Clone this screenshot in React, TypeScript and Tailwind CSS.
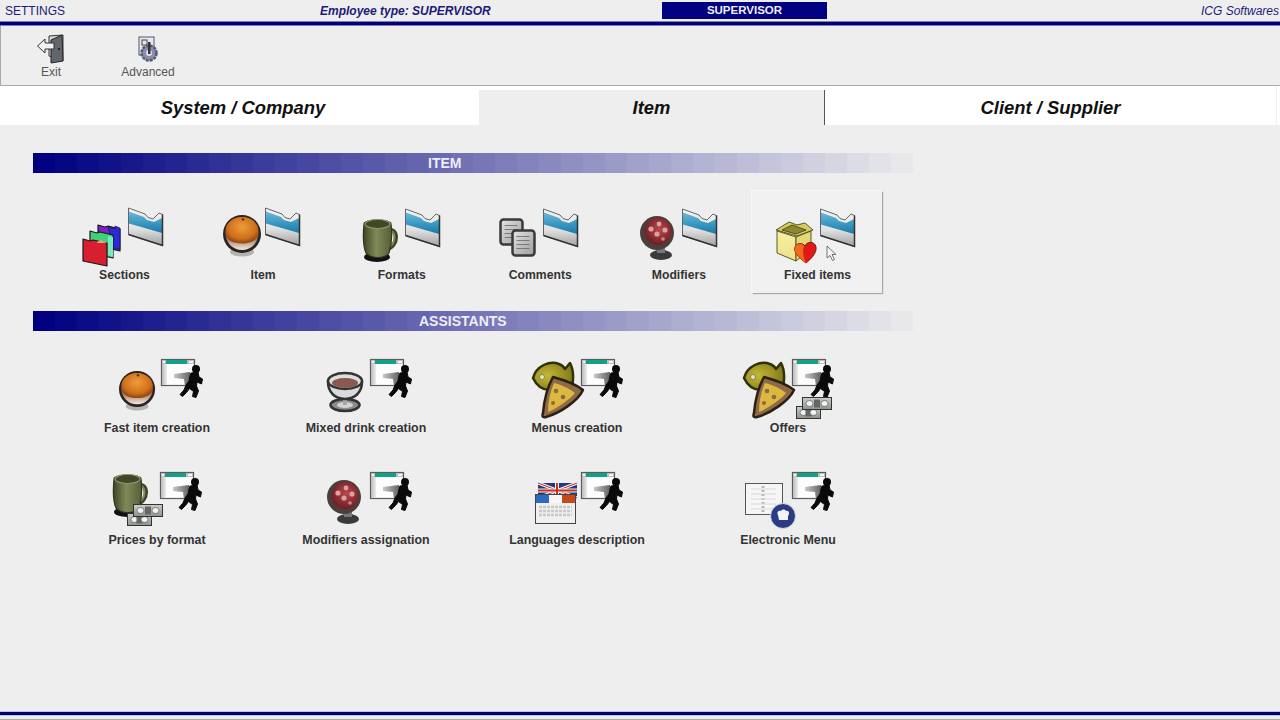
import type { ReactNode } from 'react';

const font = { fontFamily: '"Liberation Sans", Arial, sans-serif' };

function Defs() {
  return (
    <svg width="0" height="0" className="absolute">
      <defs>
        <linearGradient id="folderBlue" x1="0" y1="0" x2="0" y2="1">
          <stop offset="0" stopColor="#6cb8d8" />
          <stop offset="0.6" stopColor="#3494be" />
          <stop offset="1" stopColor="#1c7aa6" />
        </linearGradient>
        <linearGradient id="folderGray" x1="0" y1="0" x2="0" y2="1">
          <stop offset="0" stopColor="#f4f4f4" />
          <stop offset="0.55" stopColor="#e2e2e2" />
          <stop offset="1" stopColor="#a0a0a0" />
        </linearGradient>
        <radialGradient id="orange" cx="0.5" cy="0.38" r="0.62">
          <stop offset="0" stopColor="#ee9c3c" />
          <stop offset="0.7" stopColor="#cf6f1a" />
          <stop offset="1" stopColor="#8a4510" />
        </radialGradient>
        <linearGradient id="orangeBase" x1="0" y1="0" x2="0" y2="1">
          <stop offset="0.6" stopColor="#8a5a3a" />
          <stop offset="0.8" stopColor="#c8a898" />
          <stop offset="1" stopColor="#f0e8e4" />
        </linearGradient>
        <linearGradient id="mug" x1="0" y1="0" x2="1" y2="0">
          <stop offset="0" stopColor="#3f4628" />
          <stop offset="0.45" stopColor="#7f8a58" />
          <stop offset="1" stopColor="#565f38" />
        </linearGradient>
        <radialGradient id="ball" cx="0.55" cy="0.42" r="0.62">
          <stop offset="0" stopColor="#b8484e" />
          <stop offset="1" stopColor="#6a1c20" />
        </radialGradient>
        <radialGradient id="fish" cx="0.35" cy="0.45" r="0.7">
          <stop offset="0" stopColor="#c4b838" />
          <stop offset="1" stopColor="#7c7414" />
        </radialGradient>
        <linearGradient id="money" x1="0" y1="0" x2="0" y2="1">
          <stop offset="0" stopColor="#c8cec8" />
          <stop offset="1" stopColor="#8d948e" />
        </linearGradient>
        <linearGradient id="doc" x1="0" y1="0" x2="1" y2="1">
          <stop offset="0" stopColor="#e4e4e4" />
          <stop offset="1" stopColor="#9c9c9c" />
        </linearGradient>
        <linearGradient id="box" x1="0" y1="0" x2="0" y2="1">
          <stop offset="0" stopColor="#f6f0a4" />
          <stop offset="1" stopColor="#ece284" />
        </linearGradient>
        <linearGradient id="arm" x1="0" y1="0" x2="1" y2="0">
          <stop offset="0" stopColor="#c8c8c8" />
          <stop offset="1" stopColor="#555" />
        </linearGradient>
        <linearGradient id="strip" x1="0" y1="0" x2="1" y2="0">
          <stop offset="0" stopColor="#bcbcbc" />
          <stop offset="1" stopColor="#ececec" />
        </linearGradient>
      </defs>
    </svg>
  );
}

function Folder({ x, y }: { x: number; y: number }) {
  return (
    <g transform={`translate(${x} ${y})`}>
      <path
        d="M0.500 1 L17 7 L20 10.500 L25 12 L31 6 L34.500 7.500 L34.500 38.500 L0.500 27.500 Z"
        fill="url(#folderGray)"
        stroke="#555"
        strokeWidth="0.900"
        strokeLinejoin="round"
      />
      <path d="M1 4.500 L16 10 L19 13 L26 15 L34 11 L34 26 L1 16.500 Z" fill="url(#folderBlue)" />
      <path d="M34.500 7.500 L34.500 38.500 L0.500 27.500" fill="none" stroke="#333" strokeWidth="1.500" />
    </g>
  );
}

function Orange({ x, y, s = 1 }: { x: number; y: number; s?: number }) {
  return (
    <g transform={`translate(${x} ${y}) scale(${s})`}>
      <ellipse cx="19" cy="37" rx="12" ry="4.500" fill="#777" opacity="0.5" />
      <circle cx="19" cy="19" r="19" fill="#2c2420" />
      <circle cx="19" cy="18.500" r="16.500" fill="url(#orangeBase)" />
      <path d="M2.500 16 A16.500 14 0 0 1 35.500 16 C35.500 25 28 28.500 19 28.500 C10 28.500 2.500 25 2.500 16 Z" fill="url(#orange)" />
      <circle cx="20" cy="4.500" r="1.300" fill="#5a3410" />
    </g>
  );
}

function Mug({ x, y }: { x: number; y: number }) {
  return (
    <g transform={`translate(${x} ${y})`}>
      <ellipse cx="14" cy="39" rx="13" ry="5" fill="#111" />
      <path d="M24 12 C36 9 36 28 24 31" fill="none" stroke="#3c4226" strokeWidth="4" />
      <path d="M24 12 C34 10 34 28 24 30" fill="none" stroke="#7f8a58" strokeWidth="2" />
      <path d="M1 6 C0 16 0 28 3 35 C8 41 22 41 26 35 C29 26 29 14 28 6 C28 1 1 1 1 6 Z" fill="url(#mug)" stroke="#30341e" strokeWidth="1.200" />
      <ellipse cx="14.500" cy="6" rx="12.500" ry="4.500" fill="#3f4826" stroke="#8d9668" strokeWidth="1.200" />
    </g>
  );
}

function Sections({ x, y }: { x: number; y: number }) {
  const sheet = (dx: number, dy: number, color: string, w: number, h: number) => (
    <path
      d={`M${dx} ${dy} L${dx + 7} ${dy + 2} L${dx + 10} ${dy + 1} L${dx + w} ${dy + 4} L${dx + w} ${dy + h} L${dx} ${dy + h - 5} Z`}
      fill={color}
      stroke="#1a1a1a"
      strokeWidth="1.200"
      strokeLinejoin="round"
    />
  );
  return (
    <g transform={`translate(${x} ${y})`}>
      {sheet(16, 1, '#7a22c8', 22, 26)}
      <path d="M26 3 L33 5 L33 2 L38 4 L38 25 L32 25 Z" fill="#2a2ad8" stroke="#111" strokeWidth="0.600" />
      {sheet(8, 7, '#3fd07a', 23, 27)}
      <path d="M26 12 L31 13 L31 33 L26 31 Z" fill="#7ce8c0" />
      {sheet(1, 15, '#d81f30', 24, 27)}
      <path d="M15 18 L19 16 L25 19 L15 19 Z" fill="#e8a080" />
    </g>
  );
}

function Comments({ x, y }: { x: number; y: number }) {
  const doc = (dx: number, dy: number, w: number, h: number) => (
    <g>
      <rect x={dx} y={dy} width={w} height={h} rx="3" fill="url(#doc)" stroke="#3a3a3a" strokeWidth="2.500" />
      {[6, 10, 14, 18].map((l) => (
        <line key={l} x1={dx + 4} x2={dx + w - 5} y1={dy + l} y2={dy + l} stroke="#666" strokeWidth="0.800" />
      ))}
    </g>
  );
  return (
    <g transform={`translate(${x} ${y})`}>
      {doc(1.500, 1.500, 22, 25)}
      {doc(13.500, 12.500, 22, 25)}
    </g>
  );
}

function Ball({ x, y }: { x: number; y: number }) {
  return (
    <g transform={`translate(${x} ${y})`}>
      <ellipse cx="21" cy="39" rx="11" ry="5" fill="#3a3a3a" />
      <rect x="17" y="28" width="8" height="9" fill="#777" />
      <ellipse cx="17" cy="17" rx="17" ry="17" fill="#4a3f3c" />
      <ellipse cx="18" cy="15.500" rx="13.500" ry="13.500" fill="url(#ball)" />
      <circle cx="11" cy="13" r="2.600" fill="#dca0a0" />
      <circle cx="19" cy="8" r="2.400" fill="#dca0a0" />
      <circle cx="25" cy="14" r="2.600" fill="#dca0a0" />
      <circle cx="17" cy="18" r="2.600" fill="#dca0a0" />
      <circle cx="23" cy="23" r="1.800" fill="#cc8888" />
    </g>
  );
}

function GiftBox({ x, y }: { x: number; y: number }) {
  return (
    <g transform={`translate(${x} ${y})`} stroke="#4a4a20" strokeWidth="0.900" strokeLinejoin="round">
      <path d="M1 9 L14 1 L22 4 L30 2 L38 9 L22 15 Z" fill="#d4cc60" />
      <path d="M7 9 L17 4 L31 9 L21 13 Z" fill="#8e8a2c" />
      <path d="M2 10 L21 16 L21 40 L2 32 Z" fill="url(#box)" />
      <path d="M21 16 L36 10 L36 28 L21 40 Z" fill="#e2d874" />
      <path d="M31 42 C24 37 18 31 20 26 C22 21 28 22 30 25 C32 20 40 20 41 26 C42 32 36 38 31 42 Z" fill="#e01818" stroke="#7a1010" />
      <path d="M31 42 C24 37 18 31 20 26 C22 22 27 22 29 25 C27 31 29 37 31 42 Z" fill="#ee6a1c" stroke="none" />
    </g>
  );
}

function Cursor({ x, y }: { x: number; y: number }) {
  return (
    <path
      transform={`translate(${x} ${y})`}
      d="M0 0 L0 12 L3 9.500 L5.500 14.500 L7.500 13.500 L5 8.500 L9 8.500 Z"
      fill="#f4f4f4"
      stroke="#555"
      strokeWidth="0.800"
    />
  );
}

function RunnerWindow({ x, y }: { x: number; y: number }) {
  return (
    <g transform={`translate(${x} ${y})`}>
      <rect x="0.500" y="0.500" width="33" height="26" fill="#fdfdfd" stroke="#5c5c5c" strokeWidth="1.200" />
      <rect x="1" y="5" width="5" height="21" fill="url(#strip)" />
      <rect x="1" y="1" width="32" height="4" fill="#bdbdbd" />
      <rect x="5" y="1" width="21" height="4" fill="#12a088" />
      <rect x="2" y="2" width="2" height="2" fill="#f4f4f4" />
      <rect x="28" y="2" width="4" height="2" fill="#f4f4f4" />
      <path d="M13 15 L29 13 L31 20 L30 28 L24 28 L23 20 L13 19 Z" fill="url(#arm)" />
      <circle cx="35" cy="10" r="4" fill="#0a0a0a" />
      <path
        d="M30 14 L37 13 L38 18 L41.500 20 L40.500 25 L36 23 L35.500 27 L37.500 32 L35 38.500 L31.500 37.500 L32.500 32.500 L28.500 29.500 L25.500 33.500 L21.500 37.500 L19 35.500 L23 31 L25 26 L28 22 L29 17 Z"
        fill="#0a0a0a"
        stroke="#0a0a0a"
        strokeWidth="1"
        strokeLinejoin="round"
      />
    </g>
  );
}

function Glass({ x, y }: { x: number; y: number }) {
  return (
    <g transform={`translate(${x} ${y})`}>
      <ellipse cx="18" cy="33" rx="14.500" ry="6" fill="#8c8c8c" stroke="#333" strokeWidth="2.500" />
      <ellipse cx="18" cy="33" rx="8" ry="3" fill="#d4d4d4" />
      <rect x="16" y="24" width="4" height="9" fill="#a8a8a8" />
      <path d="M1 10 C1 20 8 27 18 27 C28 27 35 20 35 10 Z" fill="#d8dcdc" stroke="#333" strokeWidth="2.500" />
      <ellipse cx="18" cy="9" rx="17" ry="8" fill="#dedede" stroke="#333" strokeWidth="2.500" />
      <ellipse cx="18" cy="11" rx="13" ry="5" fill="#8a5a50" />
    </g>
  );
}

function FishPizza({ x, y }: { x: number; y: number }) {
  return (
    <g transform={`translate(${x} ${y})`}>
      <path
        d="M1 18 C4 6 18 0 27 4 C30 5 32 7 33 9 L38 3 C42 10 42 22 39 31 L32 24 C26 31 9 35 1 18 Z"
        fill="url(#fish)"
        stroke="#30300c"
        strokeWidth="2.500"
        strokeLinejoin="round"
      />
      <circle cx="10" cy="17" r="2.500" fill="#e8e4b0" stroke="#555" strokeWidth="0.600" />
      <path
        d="M21 17 C32 20 45 25 51 30 C46 41 28 53 14 57 C10 58 10 56 11 53 C12 41 15 28 21 17 Z"
        fill="#8e6a48"
        stroke="#2a2014"
        strokeWidth="2.500"
        strokeLinejoin="round"
      />
      <path d="M22 23 C30 25 38 29 43 33 C38 39 26 48 16 52 C16 42 18 32 22 23 Z" fill="#dcb840" />
      <circle cx="24" cy="31" r="2.300" fill="#8a6a40" />
      <circle cx="31" cy="37" r="2.300" fill="#8a6a40" />
      <circle cx="21" cy="43" r="2" fill="#8a6a40" />
    </g>
  );
}

function Money({ x, y }: { x: number; y: number }) {
  const bill = (dx: number, dy: number, w: number) => (
    <g>
      <rect x={dx} y={dy} width={w} height="12" fill="url(#money)" stroke="#333" strokeWidth="1" />
      <ellipse cx={dx + 7} cy={dy + 6} rx="3.500" ry="3" fill="#f2f2f2" stroke="#444" strokeWidth="0.600" />
      <rect x={dx + w / 2 - 3} y={dy + 2} width="6" height="8" fill="#666" />
      <ellipse cx={dx + w - 7} cy={dy + 6} rx="3.500" ry="3" fill="#f2f2f2" stroke="#444" strokeWidth="0.600" />
    </g>
  );
  return (
    <g transform={`translate(${x} ${y})`}>
      {bill(0.500, 9.500, 24)}
      {bill(6.500, 0.500, 29)}
    </g>
  );
}

function KeyboardFlags({ x, y }: { x: number; y: number }) {
  return (
    <g transform={`translate(${x} ${y})`}>
      <rect x="3" y="0" width="39" height="15" fill="#203a80" />
      <path d="M3 0 L42 15 M42 0 L3 15" stroke="#f0f0f0" strokeWidth="3" />
      <path d="M3 0 L42 15 M42 0 L3 15" stroke="#c83020" strokeWidth="1" />
      <path d="M22 0 V15 M3 7.500 H42" stroke="#f0f0f0" strokeWidth="4" />
      <path d="M22 0 V15 M3 7.500 H42" stroke="#c83020" strokeWidth="2" />
      <rect x="0.500" y="11.500" width="40" height="29" fill="#f0f0f0" stroke="#444" />
      <rect x="1" y="12" width="13" height="8" fill="#2a6cc0" />
      <rect x="14" y="12" width="13" height="8" fill="#f6f6f6" />
      <rect x="27" y="12" width="13" height="8" fill="#c84818" />
      {[24, 28, 32].map((k) => (
        <line key={k} x1="4" x2="37" y1={k} y2={k} stroke="#c8c8c8" strokeWidth="2.500" strokeDasharray="3 1" />
      ))}
    </g>
  );
}

function MenuBook({ x, y }: { x: number; y: number }) {
  return (
    <g transform={`translate(${x} ${y})`}>
      <rect x="0.500" y="0.500" width="37" height="31" fill="#f6f6f6" stroke="#555" />
      <line x1="18" x2="18" y1="3" y2="29" stroke="#b8b8b8" strokeWidth="3" strokeDasharray="2 2" />
      {[6, 11, 16, 21, 26].map((k) => (
        <line key={k} x1="6" x2="31" y1={k} y2={k} stroke="#d8d8d8" />
      ))}
      <circle cx="38" cy="33" r="12.500" fill="#2c3c84" stroke="#dddddd" strokeWidth="1" />
      <path d="M33 32 C31 28 35 27 36 28 C37 26 40 26 41 28 C44 27 45 31 43 33 L43 37 L34 37 Z" fill="#f4f4f4" />
    </g>
  );
}

function Exit() {
  return (
    <svg width="28" height="30" viewBox="0 0 28 30">
      <path d="M12 2 L26 1 L26 27 L12 22 Z" fill="#d8d8d8" stroke="#333" />
      <path d="M14 6 L25 1 L26 27 L14 29 Z" fill="#60666c" stroke="#222" />
      <circle cx="22" cy="15" r="1" fill="#111" />
      <path d="M0.500 12 L8 5 L8 9 L17 9 L17 15 L8 15 L8 19 Z" fill="#f2f2f2" stroke="#333" />
    </svg>
  );
}

function Advanced() {
  return (
    <svg width="26" height="26" viewBox="0 0 26 26">
      <rect x="4" y="1" width="15" height="18" fill="#e8e8f0" stroke="#555570" />
      <rect x="7" y="4" width="5" height="5" fill="none" stroke="#444" />
      <circle cx="14" cy="17" r="7.500" fill="#8a8eaa" stroke="#555a78" strokeDasharray="3 1" strokeWidth="2.500" />
      <circle cx="14" cy="17" r="3" fill="#e0e0e8" />
      <rect x="13" y="6" width="2.500" height="12" fill="#333" />
    </svg>
  );
}

function Tile({ label, active, children }: { label: string; active?: boolean; children: ReactNode }) {
  return (
    <div
      className={`flex h-[102px] w-[130px] flex-col items-center pt-[9px] ${active ? 'bg-[#f0f0f0] shadow-[1px_1px_1px_#a8a8a8,-1px_-1px_0_#f8f8f8]' : ''}`}
    >
      <svg width="130" height="68" viewBox="-65 0 130 68" className="shrink-0">
        {children}
      </svg>
      <span className="text-[12.2px] font-bold leading-[14px] text-[#333]">{label}</span>
    </div>
  );
}

function Assistant({ label, children }: { label: string; children: ReactNode }) {
  return (
    <div className="flex flex-col items-center">
      <svg width="130" height="71" viewBox="-65 0 130 71" className="shrink-0">
        {children}
      </svg>
      <span className="whitespace-nowrap text-[12.4px] font-bold leading-[14px] text-[#333]">{label}</span>
    </div>
  );
}

function SectionBar({ title, offset }: { title: string; offset: string }) {
  const steps = Array.from({ length: 40 }, (_, i) => i / 40);
  return (
    <div className="relative mx-[33px] flex h-[20px] w-[880px] items-center">
      <div className="absolute inset-0 flex">
        {steps.map((t) => {
          const r = Math.round(238 * t);
          const g = Math.round(238 * t);
          const b = Math.round(128 + 110 * t);
          return <div key={t} className="flex-1" style={{ backgroundColor: `rgb(${r},${g},${b})` }} />;
        })}
      </div>
      <span className={`relative text-[14px] font-bold leading-none text-[#eeeef8] ${offset}`}>{title}</span>
    </div>
  );
}

export default function App() {
  return (
    <div className="flex h-screen w-full flex-col overflow-hidden bg-[#eeeeee]" style={font}>
      <Defs />
      {/* title strip */}
      <div className="flex h-[21px] items-center">
        <span className="w-[320px] pl-[5px] text-[12px] leading-none text-[#1c1c78]">SETTINGS</span>
        <span className="w-[342px] text-[12px] font-bold italic leading-none text-[#1c1c78]">
          Employee type: SUPERVISOR
        </span>
        <div className="flex h-[17px] w-[165px] items-center justify-center bg-[#000080] text-[11.5px] font-bold text-[#eeeef8]">
          SUPERVISOR
        </div>
        <span className="ml-auto w-[79px] overflow-hidden whitespace-nowrap text-[12px] italic leading-none text-[#1c1c78]">
          ICG Softwares
        </span>
      </div>
      <div className="h-[5px] border-y border-[#7c7cc0] bg-[#000070]" />

      {/* toolbar */}
      <div className="flex h-[60px] border-b border-l border-[#ababab] pl-[21px]">
        <button className="flex w-[58px] flex-col items-center pt-[8px] text-[12px] leading-none text-[#555]">
          <Exit />
          <span className="mt-[2px]">Exit</span>
        </button>
        <button className="ml-[39px] flex w-[58px] flex-col items-center pt-[10px] text-[12px] leading-none text-[#555]">
          <Advanced />
          <span className="mt-[4px]">Advanced</span>
        </button>
      </div>

      {/* tabs */}
      <div className="flex h-[39px] bg-white text-[18.4px] font-bold italic text-[#111]">
        <div className="flex w-[479px] items-center justify-center pl-[7px] pt-[5px]">System / Company</div>
        <div className="mt-[4px] flex w-[346px] items-center justify-center border-r border-[#555] bg-[#eeeeee] pt-[1px]">
          Item
        </div>
        <div className="flex w-[452px] items-center justify-center border-r border-[#f0f0f0] pt-[5px]">
          Client / Supplier
        </div>
      </div>

      {/* item section */}
      <div className="mt-[28px]">
        <SectionBar title="ITEM" offset="ml-[395px]" />
      </div>
      <div className="ml-[59.5px] mt-[18px] flex gap-[8.6px]">
        <Tile label="Sections">
          <Folder x={3} y={7} />
          <Sections x={-43} y={24} />
        </Tile>
        <Tile label="Item">
          <Folder x={2} y={7} />
          <Orange x={-40} y={15} />
        </Tile>
        <Tile label="Formats">
          <Folder x={3} y={8} />
          <Mug x={-39} y={18} />
        </Tile>
        <Tile label="Comments">
          <Folder x={3} y={8} />
          <Comments x={-41} y={18} />
        </Tile>
        <Tile label="Modifiers">
          <Folder x={3} y={8} />
          <Ball x={-39} y={16} />
        </Tile>
        <Tile label="Fixed items" active>
          <Folder x={3} y={8} />
          <GiftBox x={-42} y={21} />
          <Cursor x={10} y={46} />
        </Tile>
      </div>

      {/* assistants section */}
      <div className="mt-[18px]">
        <SectionBar title="ASSISTANTS" offset="ml-[386px]" />
      </div>
      <div className="ml-[53px] mt-[19px] grid grid-cols-[208px_210px_212px_210px] gap-y-[27px]">
        <Assistant label="Fast item creation">
          <RunnerWindow x={4} y={9} />
          <Orange x={-38} y={21} s={0.95} />
        </Assistant>
        <Assistant label="Mixed drink creation">
          <RunnerWindow x={4} y={9} />
          <Glass x={-39} y={22} />
        </Assistant>
        <Assistant label="Menus creation">
          <FishPizza x={-45} y={10} />
          <RunnerWindow x={4} y={9} />
        </Assistant>
        <Assistant label="Offers">
          <FishPizza x={-45} y={10} />
          <RunnerWindow x={4} y={9} />
          <Money x={8} y={47} />
        </Assistant>
        <Assistant label="Prices by format">
          <Mug x={-44} y={11} />
          <Money x={-30} y={42} />
          <RunnerWindow x={3} y={10} />
        </Assistant>
        <Assistant label="Modifiers assignation">
          <RunnerWindow x={4} y={10} />
          <Ball x={-39} y={18} />
        </Assistant>
        <Assistant label="Languages description">
          <KeyboardFlags x={-42} y={21} />
          <RunnerWindow x={4} y={10} />
        </Assistant>
        <Assistant label="Electronic Menu">
          <MenuBook x={-43} y={21} />
          <RunnerWindow x={4} y={10} />
        </Assistant>
      </div>

      {/* footer rule */}
      <div className="mt-auto h-[9px]">
        <div className="h-[5px] border-y border-[#c0c0e4] bg-[#000070]" />
        <div className="mt-[3px] h-px bg-[#ababab]" />
      </div>
    </div>
  );
}
